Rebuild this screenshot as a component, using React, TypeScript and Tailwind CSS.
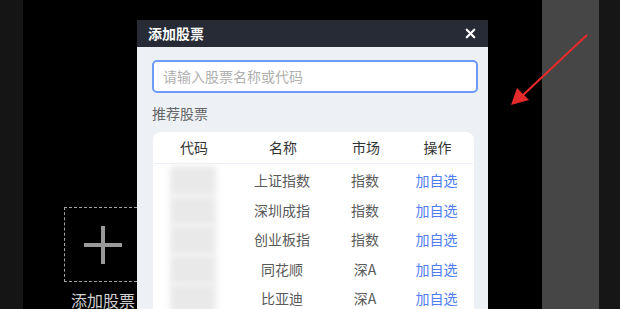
import { X } from 'lucide-react';

const rows = [
  { name: '上证指数', market: '指数' },
  { name: '深圳成指', market: '指数' },
  { name: '创业板指', market: '指数' },
  { name: '同花顺', market: '深A' },
  { name: '比亚迪', market: '深A' },
];

function StockRow({ name, market }: { name: string; market: string }) {
  return (
    <div className="grid grid-cols-[80px_98px_68px_75px] h-[29.5px] items-center text-[14px] text-[#5a5a5a]">
      <div className="flex justify-center">
        <div className="w-[46px] h-[29px] bg-[#e9e9e9] blur-[3px]" />
      </div>
      <span className="text-center">{name}</span>
      <span className="text-center">{market}</span>
      <span className="text-center text-[#4f7df5]">加自选</span>
    </div>
  );
}

function AddStockDialog() {
  return (
    <div className="absolute left-[114px] top-[20px] w-[351px] h-[289px] overflow-hidden bg-[#edf1f6]">
      <div className="flex items-center justify-between h-[27px] bg-[#262b36] pl-[11px] pr-[10px]">
        <span className="text-[14px] font-bold text-white">添加股票</span>
        <X size={15} strokeWidth={3.5} className="text-white" />
      </div>
      <div className="pl-[15px] pr-[10px] pt-[13px]">
        <div className="h-[33px] rounded-[5px] border-2 border-[#6d9bf7] bg-white flex items-center px-[9px] text-[14px] text-[#b0b0b0]">
          请输入股票名称或代码
        </div>
        <div className="mt-[10px] text-[14px] text-[#666]">推荐股票</div>
        <div className="mt-[8px] ml-[1px] mr-[4px] rounded-t-[8px] bg-white h-[220px]">
          <div className="grid grid-cols-[80px_98px_68px_75px] h-[32px] items-center text-[14px] text-[#333] border-b border-[#edf1f7] mx-[1px]">
            <span className="text-center">代码</span>
            <span className="text-center">名称</span>
            <span className="text-center">市场</span>
            <span className="text-center">操作</span>
          </div>
          <div className="pt-[2px]">
            {rows.map((r) => (
              <StockRow key={r.name} {...r} />
            ))}
          </div>
        </div>
      </div>
    </div>
  );
}

export default function App() {
  return (
    <div
      className="flex w-[620px] h-[309px] overflow-hidden"
      style={{ fontFamily: '"Noto Sans CJK SC", "Noto Sans", sans-serif' }}
    >
      <div className="w-[23px] bg-[#151515]" />
      <div className="relative flex-1 bg-black">
        <div className="absolute left-[41px] top-[207px] flex flex-col items-center">
          <div className="w-[78px] h-[75px] border border-dashed border-[#a3a3a3] flex items-center justify-center">
            <svg width="40" height="40" viewBox="0 0 40 40">
              <rect x="18" y="1" width="4" height="38" fill="#9a9a9a" />
              <rect x="1" y="18" width="38" height="4" fill="#9a9a9a" />
            </svg>
          </div>
          <span className="mt-[6px] text-[16px] text-[#d0d0d0]">添加股票</span>
        </div>
        <AddStockDialog />
        <svg className="absolute left-[-23px] top-0" width="620" height="309" viewBox="0 0 620 309">
          <line x1="587" y1="35" x2="522" y2="96" stroke="#e42a2a" strokeWidth="2.2" />
          <polygon points="511,105 517,88 529,100" fill="#e42a2a" />
        </svg>
      </div>
      <div className="w-[57px] bg-[#464646]" />
      <div className="w-[21px] bg-[#161616]" />
    </div>
  );
}
